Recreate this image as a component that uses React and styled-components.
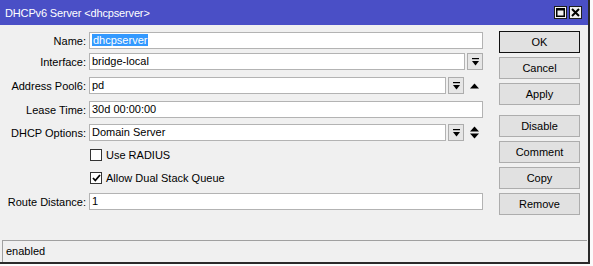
import React from 'react';
import styled, { createGlobalStyle } from 'styled-components';

const Global = createGlobalStyle`
  html, body { margin: 0; padding: 0; background: #fbfbfb; }
  body {
    font-family: "Liberation Sans", Arial, sans-serif;
    font-size: 11px;
    color: #000;
  }
`;

const Window = styled.div`
  width: 588px;
  height: 262px;
  border-right: 2px solid #2a2a2a;
  border-bottom: 2px solid #2a2a2a;
  background: #f0f0f0;
  display: flex;
  flex-direction: column;
`;

const TitleBar = styled.div`
  height: 25px;
  flex: none;
  background: #4a4fc6;
  color: #fff;
  display: flex;
  align-items: center;
  padding: 0 6px 0 5px;
  font-size: 11px;
  letter-spacing: -0.15px;
`;

const Title = styled.div`
  flex: 1;
`;

const TitleButtons = styled.div`
  display: flex;
  gap: 2px;
`;

const TitleButton = styled.div`
  width: 13px;
  height: 13px;
  box-sizing: border-box;
  background: #f0f0f0;
  border: 1px solid #1e1e1e;
  display: flex;
  align-items: center;
  justify-content: center;
`;

const Body = styled.div`
  flex: 1;
  display: flex;
  align-items: flex-start;
`;

const Form = styled.div`
  width: 483px;
  padding-top: 7px;
  display: flex;
  flex-direction: column;
`;

const Row = styled.div`
  display: grid;
  grid-template-columns: 86px 1fr;
  column-gap: 3px;
  height: 17px;
  align-items: center;
  margin-top: ${p => p.$mt || 0}px;
`;

const Label = styled.div`
  text-align: right;
  white-space: nowrap;
`;

const Controls = styled.div`
  display: flex;
  align-items: center;
  gap: 2px;
  height: 17px;
`;

const Input = styled.div`
  flex: 1;
  height: 17px;
  box-sizing: border-box;
  border: 1px solid #b3b3b3;
  background: #fff;
  padding-left: 2px;
  line-height: 15px;
  white-space: nowrap;
  overflow: hidden;
`;

const Selected = styled.span`
  background: #3399ff;
  color: #fff;
  padding: 0 1px;
`;

const DropButton = styled.div`
  width: 16px;
  height: 17px;
  box-sizing: border-box;
  border: 1px solid #adadad;
  background: #e6e6e6;
  display: flex;
  align-items: center;
  justify-content: center;
  flex: none;
`;

const ArrowSlot = styled.div`
  width: 17px;
  height: 17px;
  display: flex;
  align-items: center;
  justify-content: center;
  flex: none;
`;

const CheckLine = styled.label`
  display: flex;
  align-items: center;
  gap: 4px;
  padding-left: 1px;
`;

const CheckBox = styled.div`
  width: 12px;
  height: 12px;
  box-sizing: border-box;
  border: 1px solid #333;
  background: #fff;
  display: flex;
  align-items: center;
  justify-content: center;
`;

const ButtonColumn = styled.div`
  margin-left: 16px;
  padding-top: 6px;
  display: flex;
  flex-direction: column;
  gap: 4px;
`;

const Button = styled.div`
  width: 81px;
  height: 22px;
  box-sizing: border-box;
  border: 1px solid ${p => (p.$default ? '#111' : '#adadad')};
  background: #e1e1e1;
  display: flex;
  align-items: center;
  justify-content: center;
  margin-top: ${p => p.$mt || 0}px;
`;

const StatusBar = styled.div`
  height: 22px;
  flex: none;
  box-sizing: border-box;
  margin: 0 1px 0 2px;
  border-top: 1px solid #a0a0a0;
  border-left: 1px solid #a0a0a0;
  padding-left: 3px;
  padding-bottom: 2px;
  display: flex;
  align-items: center;
`;

const DropIcon = () => (
  <svg width="7" height="8" viewBox="0 0 7 8">
    <rect x="0" y="0" width="7" height="1.2" fill="#000" />
    <polygon points="0,3 7,3 3.5,7.5" fill="#000" />
  </svg>
);

const UpIcon = () => (
  <svg width="9" height="6" viewBox="0 0 9 6">
    <polygon points="0,5.5 9,5.5 4.5,0.5" fill="#000" />
  </svg>
);

const UpDownIcon = () => (
  <svg width="9" height="13" viewBox="0 0 9 13">
    <polygon points="0,5.5 9,5.5 4.5,0.5" fill="#000" />
    <polygon points="0,7.5 9,7.5 4.5,12.5" fill="#000" />
  </svg>
);

const CheckMark = () => (
  <svg width="9" height="8" viewBox="0 0 9 8">
    <polyline points="1,4 3.3,6.5 8,1" fill="none" stroke="#000" strokeWidth="1.8" />
  </svg>
);

const MaxIcon = () => (
  <svg width="9" height="9" viewBox="0 0 9 9">
    <rect x="0.75" y="0.75" width="7.5" height="7.5" fill="none" stroke="#000" strokeWidth="1.5" />
    <rect x="0.75" y="0.5" width="7.5" height="2" fill="#000" />
  </svg>
);

const CloseIcon = () => (
  <svg width="9" height="9" viewBox="0 0 9 9">
    <path d="M1 1 L8 8 M8 1 L1 8" stroke="#000" strokeWidth="2" />
  </svg>
);

const Field = ({ label, mt, children }) => (
  <Row $mt={mt}>
    <Label>{label}</Label>
    <Controls>{children}</Controls>
  </Row>
);

export default function App() {
  return (
    <>
      <Global />
      <Window>
        <TitleBar>
          <Title>DHCPv6 Server &lt;dhcpserver&gt;</Title>
          <TitleButtons>
            <TitleButton><MaxIcon /></TitleButton>
            <TitleButton><CloseIcon /></TitleButton>
          </TitleButtons>
        </TitleBar>
        <Body>
          <Form>
            <Field label="Name:">
              <Input><Selected>dhcpserver</Selected></Input>
            </Field>
            <Field label="Interface:" mt={4}>
              <Input>bridge-local</Input>
              <DropButton><DropIcon /></DropButton>
            </Field>
            <Field label="Address Pool6:" mt={7}>
              <Input>pd</Input>
              <DropButton><DropIcon /></DropButton>
              <ArrowSlot><UpIcon /></ArrowSlot>
            </Field>
            <Field label="Lease Time:" mt={7}>
              <Input>30d 00:00:00</Input>
            </Field>
            <Field label="DHCP Options:" mt={6}>
              <Input>Domain Server</Input>
              <DropButton><DropIcon /></DropButton>
              <ArrowSlot><UpDownIcon /></ArrowSlot>
            </Field>
            <Field label="" mt={5}>
              <CheckLine>
                <CheckBox />
                <span>Use RADIUS</span>
              </CheckLine>
            </Field>
            <Field label="" mt={6}>
              <CheckLine>
                <CheckBox><CheckMark /></CheckBox>
                <span>Allow Dual Stack Queue</span>
              </CheckLine>
            </Field>
            <Field label="Route Distance:" mt={7}>
              <Input>1</Input>
            </Field>
          </Form>
          <ButtonColumn>
            <Button $default>OK</Button>
            <Button>Cancel</Button>
            <Button>Apply</Button>
            <Button $mt={6}>Disable</Button>
            <Button>Comment</Button>
            <Button>Copy</Button>
            <Button>Remove</Button>
          </ButtonColumn>
        </Body>
        <StatusBar>enabled</StatusBar>
      </Window>
    </>
  );
}
